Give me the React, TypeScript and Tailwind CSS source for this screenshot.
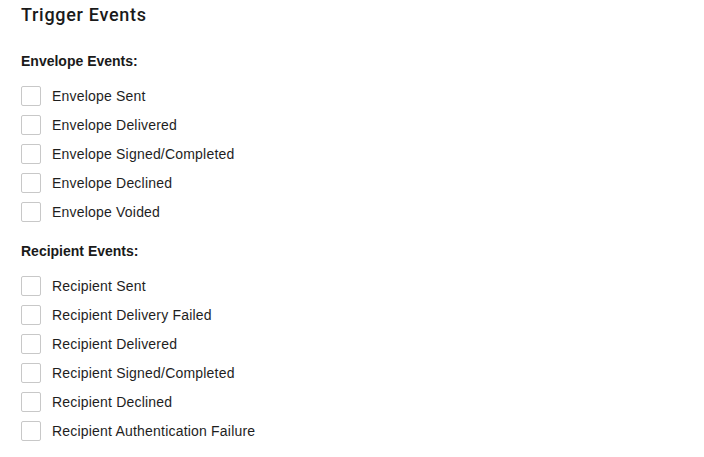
import React from 'react';

const groups = [
  {
    title: 'Envelope Events:',
    items: ['Envelope Sent', 'Envelope Delivered', 'Envelope Signed/Completed', 'Envelope Declined', 'Envelope Voided'],
  },
  {
    title: 'Recipient Events:',
    items: [
      'Recipient Sent',
      'Recipient Delivery Failed',
      'Recipient Delivered',
      'Recipient Signed/Completed',
      'Recipient Declined',
      'Recipient Authentication Failure',
    ],
  },
];

export default function App() {
  return (
    <div className="min-h-screen bg-white px-[21px] text-[#1e1e1e]" style={{ fontFamily: '"Liberation Sans", Arial, sans-serif' }}>
      {/* Title */}
      <h1
        className="h-[30px] text-[18px] font-medium leading-[29px] tracking-[0.7px] text-[#1a1a1a]"
        style={{ fontFamily: 'Roboto, "Liberation Sans", sans-serif' }}
      >
        Trigger Events
      </h1>

      {groups.map((group, gi) => (
        <div key={group.title} className={gi === 0 ? 'mt-[21px]' : 'mt-[15px]'}>
          <h2 className="mb-[10px] h-[20px] text-[14px] font-bold leading-[20px] text-[#1a1a1a]">{group.title}</h2>
          <div className="flex flex-col">
            {group.items.map((item) => (
              <label key={item} className="flex h-[29px] items-center">
                <span className="h-[20px] w-[20px] shrink-0 rounded-[2px] border border-[#c8c8c8] bg-white" />
                <span className="ml-[11px] text-[14px] leading-[18px] tracking-[0.2px] text-[#1e1e1e]">{item}</span>
              </label>
            ))}
          </div>
        </div>
      ))}
    </div>
  );
}
